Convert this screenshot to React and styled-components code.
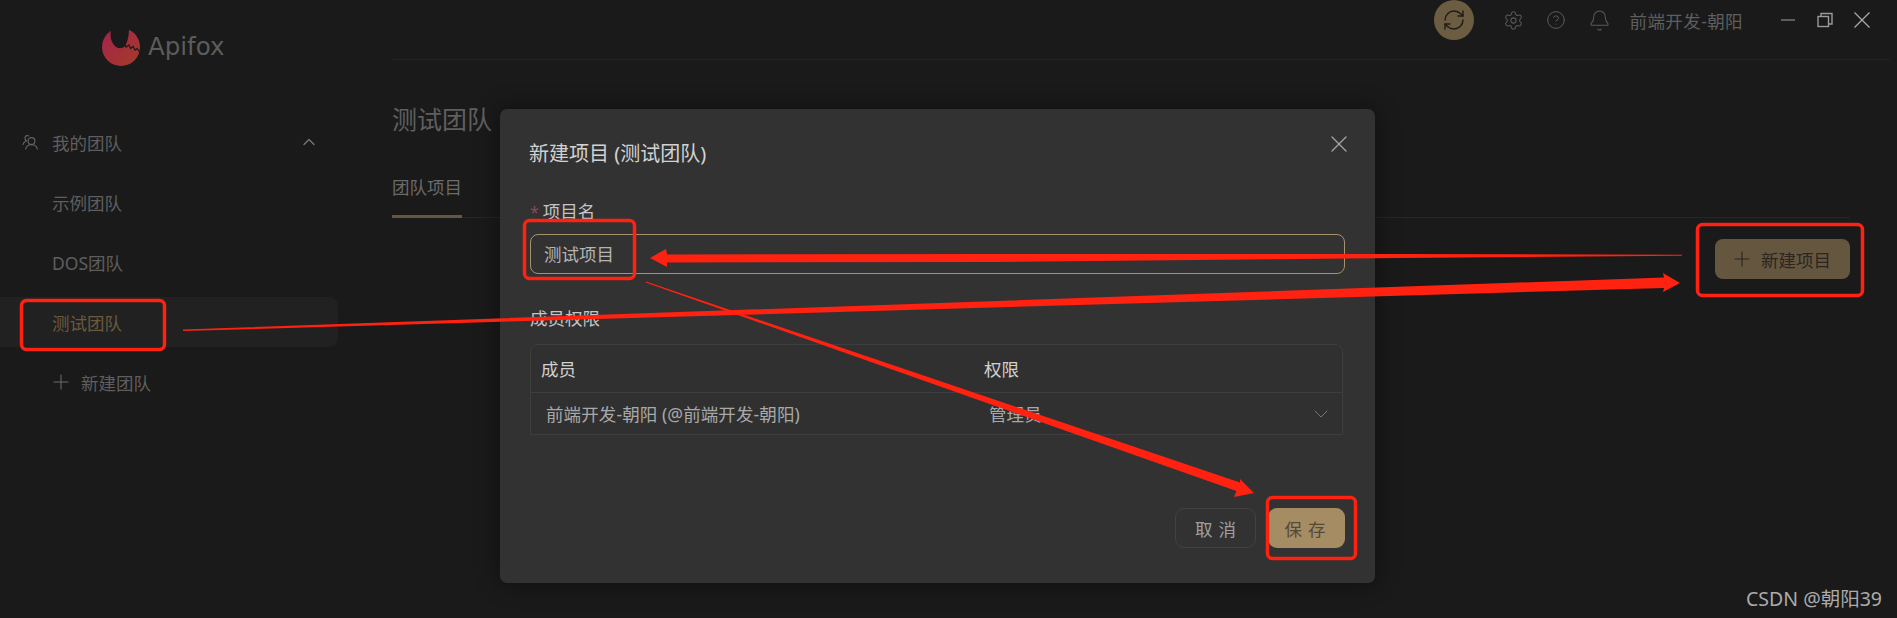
import React from 'react';
import styled, { createGlobalStyle } from 'styled-components';
import { Plus, X, ChevronUp, ChevronDown, Settings, CircleHelp, Bell, RefreshCw } from 'lucide-react';

const Global = createGlobalStyle`
  html, body { margin: 0; padding: 0; background: #1a1a1a; }
  body { font-family: "Noto Sans", "Noto Sans CJK SC", sans-serif; }
  * { box-sizing: border-box; }
`;

const Page = styled.div`
  position: relative;
  width: 1897px;
  height: 618px;
  overflow: hidden;
  background: #1a1a1a;
  display: grid;
  grid-template-columns: 392px 1fr;
`;

const Sidebar = styled.aside`
  display: flex;
  flex-direction: column;
  padding-top: 112px;
`;

const Brand = styled.div`
  position: absolute;
  left: 102px;
  top: 28px;
  display: flex;
  align-items: center;
  gap: 8px;
  color: #5c5c5c;
  font-family: "DejaVu Sans", sans-serif;
  font-size: 24.5px;
  line-height: 38px;
`;

const NavRow = styled.div`
  width: 338px;
  height: 60px;
  padding-left: ${p => (p.$icon ? '22px' : '52px')};
  padding-right: 19px;
  display: flex;
  align-items: center;
  color: ${p => (p.$active ? '#6b5a3e' : '#5e5e5e')};
  font-size: 17.5px;
  ${p => p.$active && `
    height: 50px;
    margin: 5px 0;
    background: #212121;
    border-radius: 0 9px 9px 0;
  `}
`;

const NavIcon = styled.svg`
  width: 16px;
  height: 16px;
  margin-right: 14px;
  color: #666;
`;

const NavSpacer = styled.span`flex: 1;`;

const AddRow = styled(NavRow)`
  padding-left: 49px;
  gap: 8px;
`;

const Main = styled.main`
  display: flex;
  flex-direction: column;
  min-width: 0;
`;

const TopBar = styled.header`
  height: 60px;
  margin-right: 7px;
  padding-bottom: 19px;
  border-bottom: 1px solid #222;
  display: flex;
  align-items: center;
  justify-content: flex-end;
  color: #5e5e5e;
`;

const SyncBadge = styled.div`
  width: 40px;
  height: 40px;
  border-radius: 50%;
  background: #6c5c41;
  color: #1f1c17;
  display: flex;
  align-items: center;
  justify-content: center;
  margin-right: 29px;
`;

const ToolIcon = styled.span`
  display: flex;
  margin-right: ${p => p.$gap}px;
  color: #5a5a5a;
`;

const UserName = styled.span`
  font-size: 17.5px;
  letter-spacing: .4px;
  margin-right: 37px;
`;

const WinButton = styled.svg`
  width: 16px;
  height: 16px;
  flex: none;
  margin-right: ${p => p.$gap}px;
  color: ${p => p.$color || '#8a8a8a'};
`;

const Content = styled.div`
  flex: 1;
  display: flex;
  flex-direction: column;
  padding: 40px 47px 0 0;
  position: relative;
`;

const PageTitle = styled.h1`
  margin: 0;
  font-size: 25px;
  line-height: 38px;
  font-weight: 400;
  color: #5f5f5f;
`;

const Tabs = styled.div`
  margin-top: 19px;
  height: 61px;
  border-bottom: 1px solid #262626;
  display: flex;
`;

const Tab = styled.div`
  width: 70px;
  height: 61px;
  padding-top: 6px;
  line-height: 48px;
  font-size: 17.5px;
  color: #6a6a6a;
  white-space: nowrap;
  border-bottom: 3px solid #665840;
`;

const Toolbar = styled.div`
  display: flex;
  justify-content: flex-end;
  margin-top: 21px;
`;

const NewButton = styled.div`
  width: 135px;
  height: 40px;
  border-radius: 8px;
  background: #65573f;
  color: #2a2620;
  font-size: 17.5px;
  padding-left: 15px;
  display: flex;
  align-items: center;
  gap: 7px;
`;

const Modal = styled.section`
  position: absolute;
  left: 500px;
  top: 109px;
  width: 875px;
  height: 474px;
  background: #323232;
  border-radius: 7px;
  box-shadow: 0 0 24px rgba(0, 0, 0, .45);
  padding: 0 30px 0 29px;
  display: flex;
  flex-direction: column;
  color: #c8c8c8;
  font-size: 17.5px;
`;

const ModalHeader = styled.div`
  height: 90px;
  padding-bottom: 3px;
  display: flex;
  align-items: center;
  justify-content: space-between;
`;

const ModalTitle = styled.h2`
  margin: 0;
  font-size: 20px;
  font-weight: 400;
  color: #d2d2d2;
`;

const CloseButton = styled.span`
  display: flex;
  color: #a6a6a6;
  margin-right: -8px;
  transform: translateY(-9px);
`;

const Label = styled.label`
  display: block;
  height: 24px;
  line-height: 24px;
  color: #c4c4c4;
  white-space: nowrap;
`;

const Required = styled.span`
  color: #8b4760;
  margin: 0 4px 0 1px;
  font-size: 16px;
`;

const NameInput = styled.div`
  margin: 11px 0 0 1px;
  height: 40px;
  border: 1px solid #a8926a;
  border-radius: 8px;
  padding: 0 13px;
  line-height: 38px;
  color: #b4b4b4;
`;

const PermLabel = styled(Label)`
  margin: 32px 0 0 1px;
`;

const Table = styled.div`
  margin: 14px 0 0 1px;
  width: 813px;
  height: 91px;
  border: 1px solid #3e3e3e;
  border-radius: 8px 8px 0 0;
  background: #303030;
  display: flex;
  flex-direction: column;
`;

const TableRow = styled.div`
  flex: ${p => (p.$head ? '0 0 48px' : '1')};
  display: grid;
  grid-template-columns: 443px 1fr 32px;
  align-items: center;
  padding-left: ${p => (p.$head ? '10px' : '15px')};
  color: ${p => (p.$head ? '#d0d0d0' : '#a8a8a8')};
  letter-spacing: ${p => (p.$head ? '0' : '.1px')};
  border-bottom: ${p => (p.$head ? '1px solid #3e3e3e' : 'none')};
`;

const ChevronCell = styled.span`
  display: flex;
  color: #757575;
  margin-left: -1px;
`;

const Footer = styled.div`
  margin-top: 73px;
  display: flex;
  justify-content: flex-end;
  gap: 12px;
`;

const FooterButton = styled.div`
  height: 40px;
  width: ${p => (p.$primary ? '77px' : '81px')};
  border-radius: 9px;
  display: flex;
  align-items: center;
  justify-content: center;
  letter-spacing: 6px;
  text-indent: ${p => (p.$primary ? '3px' : '6px')};
  background: ${p => (p.$primary ? '#a68c62' : 'transparent')};
  color: ${p => (p.$primary ? '#534a3a' : '#a0a0a0')};
  border: ${p => (p.$primary ? 'none' : '1px solid #424242')};
`;

const Watermark = styled.div`
  position: absolute;
  right: 15px;
  bottom: 7px;
  font-size: 19.5px;
  line-height: 24px;
  color: #ababab;
`;

const Annotations = styled.svg`
  position: absolute;
  inset: 0;
  width: 1897px;
  height: 618px;
  pointer-events: none;
`;

const RED = '#ff2211';

function Logo() {
  return (
    <svg width="38" height="38" viewBox="0 0 38 38">
      <defs>
        <linearGradient id="fox" x1="0" y1="0" x2="1" y2="1">
          <stop offset="0" stopColor="#a5234e" />
          <stop offset="1" stopColor="#a43b28" />
        </linearGradient>
      </defs>
      <circle cx="19" cy="19" r="19" fill="url(#fox)" />
      <path d="M9.5 0 C8 6 8 12 12 17 C15 20.5 19 21 22 19 C25 16 27 9 27 0 Z" fill="#1a1a1a" />
      <path d="M20 19 L23 16.5 L24 19 L27 17 L28.5 20.5 L31 18.5 L33 22 L35 20.5 L38 24" fill="none" stroke="#1a1a1a" strokeWidth="1.2" />
    </svg>
  );
}

function Annotation() {
  return (
    <Annotations viewBox="0 0 1897 618">
      <g fill="none" stroke={RED} strokeWidth="3.5">
        <rect x="21.5" y="300.5" width="143" height="49" rx="5" />
        <rect x="1697.5" y="224.5" width="165" height="71" rx="5" />
        <rect x="524.5" y="220.5" width="110" height="58" rx="5" />
        <rect x="1267.5" y="497.5" width="88" height="61" rx="5" />
      </g>
      <g fill={RED}>
        <polygon points="1682,254.7 1400,254 990,254 667,254.5 666,249 650,258 667,267 667,262.5 990,262 1400,258 1682,255.8" />
        <polygon points="183,329.5 183,331 1664,288 1663,292 1680,283 1663,273 1664,277.5" />
        <polygon points="646,281.5 645.5,282.5 1236.5,491 1234,497 1254,493 1240,479 1240,482.5" />
      </g>
    </Annotations>
  );
}

export default function App() {
  return (
    <>
      <Global />
      <Page>
        <Brand><Logo />Apifox</Brand>
        <Sidebar>
          <NavRow $icon>
            <NavIcon viewBox="0 0 16 16" fill="none" stroke="currentColor" strokeWidth="1.1">
              <circle cx="9.5" cy="7" r="3.4" />
              <path d="M3.5 15.5 C4 12.5 6.5 10.8 9.5 10.8 C12.5 10.8 15 12.5 15.5 15.5" />
              <path d="M7 2.4 C6 1 3.5 1.3 3 3.5 C2.8 5 3.5 6 4.5 6.7 C2.5 7.5 1.2 9 .8 11" />
            </NavIcon>
            我的团队
            <NavSpacer />
            <ChevronUp size={20} strokeWidth={1.6} color="#777" />
          </NavRow>
          <NavRow>示例团队</NavRow>
          <NavRow>DOS团队</NavRow>
          <NavRow $active>测试团队</NavRow>
          <AddRow><Plus size={24} strokeWidth={1.1} color="#6a6a6a" />新建团队</AddRow>
        </Sidebar>
        <Main>
          <TopBar>
            <SyncBadge><RefreshCw size={24} strokeWidth={1.4} /></SyncBadge>
            <ToolIcon $gap={22}><Settings size={21} strokeWidth={1.15} /></ToolIcon>
            <ToolIcon $gap={22}><CircleHelp size={20} strokeWidth={1.2} /></ToolIcon>
            <ToolIcon $gap={19}><Bell size={23} strokeWidth={1.05} /></ToolIcon>
            <UserName>前端开发-朝阳</UserName>
            <WinButton $gap={21} viewBox="0 0 16 16" fill="none" stroke="currentColor" strokeWidth="1.2">
              <path d="M1 8 H15" />
            </WinButton>
            <WinButton $gap={21} $color="#9a9a9a" viewBox="0 0 16 16" fill="none" stroke="currentColor" strokeWidth="1.4">
              <rect x="1" y="4.5" width="10.5" height="10" />
              <path d="M4 4.5 V1.5 H15 V12 H11.5" />
            </WinButton>
            <WinButton $gap={20} $color="#a8a8a8" viewBox="0 0 16 16" fill="none" stroke="currentColor" strokeWidth="1.3">
              <path d="M.5 .5 L15.5 15.5 M15.5 .5 L.5 15.5" />
            </WinButton>
          </TopBar>
          <Content>
            <PageTitle>测试团队</PageTitle>
            <Tabs><Tab>团队项目</Tab></Tabs>
            <Toolbar>
              <NewButton><Plus size={24} strokeWidth={1.2} />新建项目</NewButton>
            </Toolbar>
          </Content>
        </Main>
        <Modal>
          <ModalHeader>
            <ModalTitle>新建项目 (测试团队)</ModalTitle>
            <CloseButton><X size={28} strokeWidth={1.1} /></CloseButton>
          </ModalHeader>
          <Label><Required>*</Required>项目名</Label>
          <NameInput>测试项目</NameInput>
          <PermLabel>成员权限</PermLabel>
          <Table>
            <TableRow $head><span>成员</span><span>权限</span></TableRow>
            <TableRow>
              <span>前端开发-朝阳 (@前端开发-朝阳)</span>
              <span>管理员</span>
              <ChevronCell><ChevronDown size={24} strokeWidth={1} /></ChevronCell>
            </TableRow>
          </Table>
          <Footer>
            <FooterButton>取消</FooterButton>
            <FooterButton $primary>保存</FooterButton>
          </Footer>
        </Modal>
        <Annotation />
        <Watermark>CSDN @朝阳39</Watermark>
      </Page>
    </>
  );
}
